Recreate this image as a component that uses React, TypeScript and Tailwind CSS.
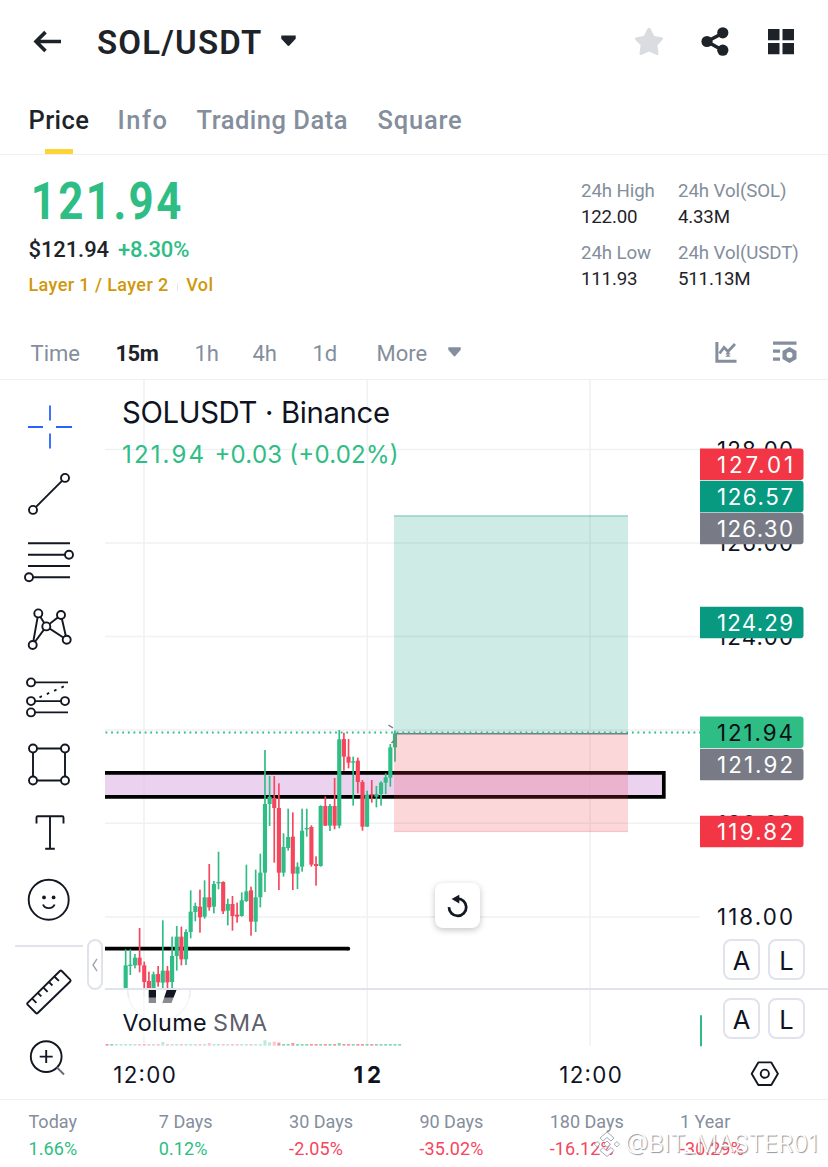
import React from "react";

const tabs = [
  { name: "Price", className: "tracking-[0.4px] text-[#1e2329]" },
  { name: "Info", className: "tracking-[1.5px] text-[#848e9c]" },
  { name: "Trading Data", className: "tracking-[0.5px] text-[#848e9c]" },
  { name: "Square", className: "tracking-[0.8px] text-[#848e9c]" },
];

const stats = [
  { label: "24h High", value: "122.00" },
  { label: "24h Vol(SOL)", value: "4.33M" },
  { label: "24h Low", value: "111.93" },
  { label: "24h Vol(USDT)", value: "511.13M" },
];

const changes = [
  { label: "Today", value: "1.66%" },
  { label: "7 Days", value: "0.12%" },
  { label: "30 Days", value: "-2.05%" },
  { label: "90 Days", value: "-35.02%" },
  { label: "180 Days", value: "-16.12%" },
  { label: "1 Year", value: "-30.29%" },
];

// [high, body top, body bottom, low, up], 3 units per pixel
const candles: [number, number, number, number, number][] = [
  [688, 736, 806, 806, 1],
  [688, 734, 738, 765, 1],
  [702, 713, 736, 745, 1],
  [624, 713, 736, 757, 0],
  [725, 736, 786, 806, 0],
  [755, 783, 806, 806, 0],
  [755, 763, 806, 806, 1],
  [738, 762, 787, 800, 0],
  [601, 752, 788, 806, 1],
  [738, 752, 787, 806, 0],
  [650, 708, 786, 806, 1],
  [618, 650, 708, 752, 1],
  [620, 650, 718, 736, 0],
  [628, 636, 718, 735, 1],
  [511, 575, 636, 655, 1],
  [548, 558, 576, 604, 1],
  [509, 560, 592, 638, 0],
  [481, 532, 590, 596, 1],
  [432, 532, 562, 572, 0],
  [483, 492, 560, 580, 1],
  [395, 486, 490, 508, 1],
  [484, 486, 574, 582, 0],
  [536, 552, 572, 616, 1],
  [528, 552, 588, 632, 0],
  [548, 584, 590, 608, 0],
  [517, 541, 588, 590, 1],
  [434, 514, 543, 546, 1],
  [500, 511, 605, 647, 0],
  [449, 532, 605, 636, 1],
  [401, 458, 532, 562, 1],
  [90, 252, 458, 516, 1],
  [168, 230, 252, 318, 1],
  [168, 234, 264, 428, 0],
  [190, 264, 458, 510, 0],
  [340, 381, 458, 470, 1],
  [266, 351, 384, 392, 1],
  [277, 350, 461, 510, 0],
  [427, 440, 461, 507, 1],
  [266, 332, 440, 455, 1],
  [266, 324, 328, 350, 1],
  [316, 321, 434, 440, 0],
  [409, 432, 438, 497, 0],
  [256, 258, 438, 440, 1],
  [229, 258, 317, 318, 0],
  [252, 258, 317, 333, 1],
  [174, 258, 317, 328, 0],
  [30, 58, 317, 325, 1],
  [38, 57, 110, 152, 0],
  [57, 110, 128, 145, 0],
  [110, 124, 128, 257, 1],
  [113, 122, 186, 220, 0],
  [180, 186, 320, 332, 0],
  [212, 224, 320, 320, 1],
  [180, 222, 226, 248, 0],
  [198, 222, 230, 262, 1],
  [184, 188, 222, 257, 1],
  [160, 172, 188, 222, 1],
  [72, 82, 173, 200, 1],
  [32, 40, 82, 125, 1],
];

const tallVolume: Record<number, number> = { 8: 11, 18: 8, 30: 16, 31: 10, 32: 12, 33: 9, 36: 8, 46: 8 };

const axisLabels = [
  { text: "128.00", y: 457.5 },
  { text: "126.00", y: 551.3 },
  { text: "124.00", y: 644.8 },
  { text: "120.00", y: 831.5 },
  { text: "118.00", y: 925 },
];

const priceTags = [
  { text: "127.01", y: 448.5, bg: "#f23645", fg: "#ffffff" },
  { text: "126.57", y: 480.7, bg: "#089981", fg: "#ffffff" },
  { text: "126.30", y: 512.8, bg: "#787b86", fg: "#ffffff" },
  { text: "124.29", y: 606.8, bg: "#089981", fg: "#ffffff" },
  { text: "121.94", y: 716.5, bg: "#2ebd85", fg: "#0c0e15" },
  { text: "121.92", y: 748.7, bg: "#787b86", fg: "#ffffff" },
  { text: "119.82", y: 815.8, bg: "#f23645", fg: "#ffffff" },
];

const Node = ({ x, y }: { x: number; y: number }) => (
  <circle cx={x} cy={y} r="4" fill="#fff" />
);

const Tool = ({ color = "#131722", children }: { color?: string; children: React.ReactNode }) => (
  <div className="flex h-[67.6px] shrink-0 items-center pl-[26px]">
    <svg
      width="48"
      height="48"
      viewBox="0 0 48 48"
      fill="none"
      stroke={color}
      strokeWidth="1.9"
      className="overflow-visible"
    >
      {children}
    </svg>
  </div>
);

const Sidebar = () => (
  <div className="relative w-[105px] shrink-0 pt-[13.2px]">
    <Tool color="#2962ff">
      <path d="M24 2.5v15M24 30.5v15M2 24h15M30 24h16" strokeWidth="1.8" />
    </Tool>
    <Tool>
      <path d="M39 6.9L7 38.9" />
      <Node x={39} y={6.9} />
      <Node x={7} y={38.9} />
    </Tool>
    <Tool>
      <path d="M2 5.3h42M2 16.8h42M2 28h42M2 39.3h42" />
      <Node x={43} y={16.8} />
      <Node x={3} y={39.3} />
    </Tool>
    <Tool>
      <path d="M6.7 39L12.3 7.4L20.3 20.4L35 9L40.7 33.7L20.3 20.4Z" />
      <Node x={12.3} y={7.4} />
      <Node x={35} y={9} />
      <Node x={20.3} y={20.4} />
      <Node x={40.7} y={33.7} />
      <Node x={6.7} y={39} />
    </Tool>
    <Tool>
      <path d="M5 9.4h37M5 28.1h34M5 39.4h37" />
      <path d="M13.5 24.3L40 12.5" strokeDasharray="2.6 5.4" />
      <Node x={5} y={9.4} />
      <Node x={5} y={28.1} />
      <Node x={39} y={28.1} />
      <Node x={5} y={39.4} />
    </Tool>
    <Tool>
      <path d="M7 7.5h32v32H7z" />
      <Node x={7} y={7.5} />
      <Node x={39} y={7.5} />
      <Node x={7} y={39.5} />
      <Node x={39} y={39.5} />
    </Tool>
    <Tool>
      <path d="M10.5 14.5V8.5q0-1.2 1.2-1.2h24.6q1.2 0 1.2 1.2v6M24 7.3v32.5M19.2 39.8h9.6" />
    </Tool>
    <Tool>
      <circle cx="22.7" cy="23.8" r="20" />
      <circle cx="18" cy="21.4" r="1.9" fill="#131722" stroke="none" />
      <circle cx="27.6" cy="21.4" r="1.9" fill="#131722" stroke="none" />
      <path d="M17 28.5c1.8 4.8 9.6 4.8 11.6 0" />
    </Tool>
    <div className="mt-[11px] ml-[15px] h-[2px] w-[68px] bg-[#e0e3eb]" />
    <div className="h-[11px]" />
    <Tool>
      <path
        d="M35.7 3L44.2 11.6q.9 1 0 1.9L11.7 45q-.9.9-1.8 0L1.6 36.6q-.9-.9 0-1.8L33.9 3q.9-.9 1.8 0Z"
        strokeLinejoin="round"
      />
      <path d="M6 30.4l4.4 4.4M11.7 24.8l3.6 3.6M17.2 19.4l4.4 4.4M22.8 13.9l3.6 3.6M28.3 8.5l4.6 4.4" />
    </Tool>
    <Tool>
      <circle cx="20.2" cy="21.6" r="15.4" />
      <path d="M13.7 21.6h13M20.2 15.1v13" />
      <path d="M31 32.5l7 7" stroke="#6a6d78" />
    </Tool>
    <div className="absolute top-[559px] left-[87px] flex h-[51px] w-[16px] items-center justify-center rounded-full border-2 border-[#e0e3eb] bg-white">
      <svg width="6" height="14" viewBox="0 0 6 14" fill="none" stroke="#a3a6af" strokeWidth="1.4">
        <path d="M5 .8L1 7l4 6.2" />
      </svg>
    </div>
  </div>
);

const ChartCanvas = () => (
  <svg
    width="723"
    height="719"
    viewBox="105 380 723 719"
    fontFamily="Inter, sans-serif"
    className="block"
  >
    <g stroke="#f0f1f3" strokeWidth="1.6">
      {[144, 367.3, 590].map((x) => (
        <path key={x} d={`M${x} 380V1046`} />
      ))}
      {[449.5, 543, 636.5, 730, 823.3, 917].map((y) => (
        <path key={y} d={`M105 ${y}H700`} />
      ))}
    </g>

    {/* supply zone and support line */}
    <path d="M100 772.8H663.8V796.9H100Z" fill="#ebd3f0" stroke="#000" strokeWidth="3.7" />
    <path d="M144 775V795M367.3 775V795M590 775V795" stroke="#dcc6e4" strokeDasharray="1.3 1.3" />
    <path d="M105 948.7H348.3" stroke="#000" strokeWidth="3.8" />
    <circle cx="348.3" cy="948.7" r="1.9" />

    <g transform="translate(100 720) scale(.33333)">
      {candles.map(([high, top, bottom, low, up], i) => {
        const x = 77 + i * 13.93;
        return (
          <g key={i} fill={up ? "#2ebd85" : "#f6465d"}>
            <rect x={x - 2.5} y={high} width="5" height={low - high} />
            <rect x={x - 6.2} y={top} width="12.4" height={bottom - top} />
          </g>
        );
      })}
      {Array.from({ length: 64 }, (_, n) => {
        const i = n - 4;
        const h = tallVolume[i] ?? 5;
        const up = i >= 0 && i < candles.length ? candles[i][4] : n % 4;
        return (
          <rect
            key={n}
            x={77 + i * 13.93 - 4.5}
            y={977 - h}
            width="9"
            height={h}
            fill={up ? "#2ebd85" : "#f6465d"}
            opacity={i > 32 || i < -2 ? 0.6 : 0.32}
          />
        );
      })}
    </g>

    {/* long position */}
    <rect x="394" y="515.3" width="234" height="218" fill="#089981" fillOpacity=".2" />
    <rect x="394" y="734" width="234" height="98" fill="#f23645" fillOpacity=".2" />
    <path d="M394 516H628" stroke="#089981" strokeOpacity=".3" strokeWidth="1.4" />
    <path d="M394 831.5H628" stroke="#f23645" strokeOpacity=".12" strokeWidth="1.4" />
    <path d="M396 733.8H628" stroke="#787b86" strokeWidth="1.6" />
    <path d="M388.5 725l4.5 3M391.5 743l3-3" stroke="#787b86" strokeWidth="1.5" />
    <path d="M105.500 732.5H700" stroke="#2ebd85" strokeWidth="1.8" strokeDasharray="1.8 3.8" />

    {/* volume pane */}
    <path d="M127.7 990a31.3 31.3 0 0 0 62.6 0" fill="none" stroke="#ebecef" strokeWidth="1.6" />
    <path d="M148.7 990h7.3v13h-7.3zM166.7 990h9.8l-5 13h-9.2z" fill="#131722" />
    <rect x="122" y="997.5" width="146" height="40" fill="#fff" fillOpacity=".5" />
    <path d="M105 989H828" stroke="#e0e3eb" strokeWidth="2" />
    <path d="M701 1015.3V1046.3" stroke="#2ebd85" strokeWidth="2" />
    <text x="122.5" y="1031" fontSize="23.3" fill="#0f131f" textLength="84">
      Volume
    </text>
    <text x="213" y="1031" fontSize="23.3" fill="#5d606b" textLength="54">
      SMA
    </text>

    <text x="122" y="422.7" fontSize="29.3" fill="#0f131f" textLength="268">
      SOLUSDT · Binance
    </text>
    <g fontSize="24" fill="#2ebd85">
      <text x="122" y="463" textLength="82">
        121.94
      </text>
      <text x="214.500" y="463" textLength="184">
        +0.03 (+0.02%)
      </text>
    </g>

    <g fontSize="22.3" fill="#0f131f">
      {axisLabels.map((label) => (
        <text key={label.text} x="717" y={label.y} textLength="76">
          {label.text}
        </text>
      ))}
      {priceTags.map((tag) => (
        <g key={tag.text}>
          <path
            d={`M700 ${tag.y}h100.5q3 0 3 3v25.5q0 3-3 3H700z`}
            fill={tag.bg}
          />
          <text x="717" y={tag.y + 24.6} fill={tag.fg} textLength="76">
            {tag.text}
          </text>
        </g>
      ))}
      <text x="113.3" y="1082.6" textLength="62.500">
        12:00
      </text>
      <text x="353.5" y="1082.6" fontWeight="700" textLength="27.500">
        12
      </text>
      <text x="559.3" y="1082.6" textLength="62.500">
        12:00
      </text>
    </g>

    <g fill="none" stroke="#131722" strokeWidth="1.9" strokeLinejoin="round">
      <path d="M758.3 1062.4h13l6.6 11.3-6.6 11.3h-13l-6.6-11.3z" />
      <circle cx="764.8" cy="1073.7" r="4.1" />
    </g>
  </svg>
);

const ScaleButtons = ({ className }: { className: string }) => (
  <div className={`absolute left-[618px] flex gap-[8px] ${className}`}>
    {["A", "L"].map((letter) => (
      <button
        key={letter}
        className="flex h-[41px] w-[37px] items-center justify-center rounded-lg border-2 border-[#e0e3eb] bg-white pt-[2px] font-[Inter,sans-serif] text-[25.500px] leading-none text-[#0f131f]"
      >
        {letter}
      </button>
    ))}
  </div>
);

const Header = () => (
  <header className="flex h-[84px] items-center text-[#1e2329]">
    <svg width="30" height="24" viewBox="0 0 30 24" fill="none" stroke="currentColor" strokeWidth="3.6" className="ml-[32px]">
      <path d="M29 11.500H4M13.5 2.100L4 11.500l9.5 9.6" />
    </svg>
    <h1 className="ml-[35px] text-[33px] leading-none font-semibold tracking-[1.2px]">SOL/USDT</h1>
    <svg width="15" height="12" viewBox="0 0 15 12" fill="currentColor" className="mt-[-3px] ml-[18px]">
      <path d="M.3.5h14.4v3.2L8.4 10.6q-.9.9-1.8 0L.3 3.7z" />
    </svg>
    <svg width="30" height="30" viewBox="0 0 30 30" fill="#d9dce1" className="ml-auto">
      <path d="M13.3 2q1.7-2.4 3.4 0l3.5 7 7.2 1.2q2.6.7 1 2.8l-5 5.2 1.1 8q-.1 2.6-2.4 1.6L15 24.5l-7.1 3.3q-2.3 1-2.4-1.6l1.1-8-5-5.2q-1.6-2.1 1-2.8L9.8 9z" />
    </svg>
    <svg width="28" height="30" viewBox="0 0 28 30" fill="currentColor" className="ml-[36.500px]">
      <path d="M6 14.500L22 6M6 14.500l16 9" stroke="currentColor" strokeWidth="3.6" />
      <circle cx="6" cy="14.500" r="5.6" />
      <circle cx="21.8" cy="5.800" r="5.6" />
      <circle cx="21.8" cy="23.2" r="5.6" />
    </svg>
    <svg width="26" height="26" viewBox="0 0 26 26" fill="currentColor" className="mr-[34px] ml-[39.500px]">
      <path d="M0 0h11.5v11.3H0zM14.5 0H26v11.3H14.5zM0 14h11.5v11.3H0zM14.5 14H26v11.3H14.5z" />
    </svg>
  </header>
);

const App: React.FC = () => {
  return (
    <div className="relative h-[1167px] w-[828px] overflow-hidden bg-white font-[Roboto,sans-serif]">
      <Header />

      <nav className="grid h-[71px] grid-cols-[89px_79px_181px_auto] border-b border-[#eff0f2] pl-[28.500px] text-[25.5px] leading-none font-medium">
        {tabs.map((tab) => (
          <div key={tab.name} className="flex flex-col">
            <span className={`flex h-[65px] items-center pt-[8px] whitespace-nowrap ${tab.className}`}>
              {tab.name}
            </span>
            {tab.name === "Price" && <span className="ml-[16px] h-[5px] w-[28px] bg-[#fcd535]" />}
          </div>
        ))}
      </nav>

      <section className="flex h-[171px] justify-between pl-[28.500px]">
        <div className="pt-[19px] font-medium">
          <div className="flex h-[53px] w-40 origin-left scale-x-[0.86] items-center pt-px pl-[2px] text-[51px] leading-none font-bold tracking-[2.800px] text-[#2ebd85]">
            121.94
          </div>
          <div className="flex h-[46px] items-center gap-[9px] text-[22px] leading-none tracking-[-0.1px]">
            <span className="text-[#1e2329]">$121.94</span>
            <span className="text-[#2ebd85]">+8.30%</span>
          </div>
          <div className="flex h-6 items-center text-[18px] leading-none tracking-[0.4px] text-[#d0980b]">
            Layer 1 / Layer 2
            <span className="mx-[8px] mt-[4px] h-[8px] w-[1.5px] bg-[#e6e8ea]" />
            Vol
          </div>
        </div>
        <div className="grid w-[247px] grid-cols-[97px_auto] content-start gap-y-[10px] pt-[23px] text-[18.7px] leading-[26px] whitespace-nowrap">
          {stats.map((stat) => (
            <div key={stat.label}>
              <div className="tracking-[-0.1px] text-[#848e9c]">{stat.label}</div>
              <div className="tracking-[-0.2px] text-[#1e2329]">{stat.value}</div>
            </div>
          ))}
        </div>
      </section>

      <div className="flex h-[54px] items-center border-b border-[#eff0f2] pl-[30.500px] text-[22px] leading-none text-[#848e9c]">
        <div className="flex pt-[2px]">
          <span className="w-[85px]">Time</span>
          <span className="w-[79px] font-bold tracking-[-0.5px] text-[#1e2329]">15m</span>
          <span className="w-[58px]">1h</span>
          <span className="w-[60px]">4h</span>
          <span className="w-[64px]">1d</span>
          <span>More</span>
        </div>
        <svg width="13" height="10" viewBox="0 0 13 10" fill="currentColor" className="mt-[-2px] ml-[21px]">
          <path d="M.3.3h12.4v2.5L7.3 9q-.8.8-1.6 0L.3 2.8z" />
        </svg>
        <svg width="22" height="22" viewBox="0 0 22 22" fill="none" stroke="currentColor" strokeWidth="2.8" className="ml-auto">
          <path d="M1.9 0v19.3H21.5" strokeWidth="3" />
          <path d="M4.5 11.500L9 5.500l4 4L20 2" />
          <path d="M13 8.500l2.500 4h-5zM10.200 14.800h5.600l-2.800-2.600z" fill="currentColor" stroke="none" />
        </svg>
        <svg width="24" height="23" viewBox="0 0 24 23" fill="currentColor" className="mr-[31px] ml-[36px]">
          <path d="M0 .5h23.5v3.3H0zM0 8.500h7v3.3H0zM0 16.500h7v3.3H0z" />
          <path
            fillRule="evenodd"
            d="M16.500 6l7 4v8l-7 4-7-4v-8zM16.500 11a3 3 0 1 0 0 6 3 3 0 0 0 0-6z"
          />
        </svg>
      </div>

      <main className="flex h-[719px]">
        <Sidebar />
        <div className="relative">
          <ChartCanvas />
          <button className="absolute top-[503px] left-[330px] flex size-[45px] items-center justify-center rounded-lg bg-white shadow-[0_2px_6px_rgba(19,23,34,0.25)]">
            <svg width="22" height="24" viewBox="0 0 24 26" fill="none" stroke="#131722" strokeWidth="3">
              <path d="M2.200 14.200a9.400 9.400 0 1 0 9-9.200" />
              <path d="M5 5.400L13.400.6v9.800z" fill="#131722" stroke="none" />
            </svg>
          </button>
          <ScaleButtons className="top-[559px]" />
          <ScaleButtons className="top-[618px]" />
        </div>
      </main>

      <footer className="grid grid-cols-[repeat(6,130.3px)] border-t border-[#eff0f2] pt-[9px] pl-[28.500px] text-[18px] leading-[26px] whitespace-nowrap">
        {changes.map((item) => (
          <div key={item.label}>
            <div className="text-[#848e9c]">{item.label}</div>
            <div
              className={`pt-px tracking-[0.1px] ${item.value.startsWith("-") ? "text-[#f6465d]" : "text-[#2ebd85]"}`}
            >
              {item.value}
            </div>
          </div>
        ))}
      </footer>

      {/* author stamp over the footer */}
      <div className="absolute top-[1129px] left-[594px] flex items-center gap-[5px]">
        <svg width="26" height="26" viewBox="0 0 26 26" fill="#fff" stroke="#a9abb3" strokeWidth="1">
          <path d="M13 1l7 6-3 3-4-3.500L9 10 6 7zM13 10l3.200 3.200L13 16.400l-3.200-3.200zM3 10.500l3 2.700-3 2.700-2.500-2.700zM23 10.500l2.500 2.700-2.500 2.700-3-2.700zM9 16.500l4 3.500 4-3.500 3 3-7 6-7-6z" />
        </svg>
        <span className="font-[Inter,sans-serif] text-[24px] leading-[30px] font-light text-white [text-shadow:1px_1px_1px_#8f929b]">
          @BIT_MASTER01
        </span>
      </div>
    </div>
  );
};

export default App;
